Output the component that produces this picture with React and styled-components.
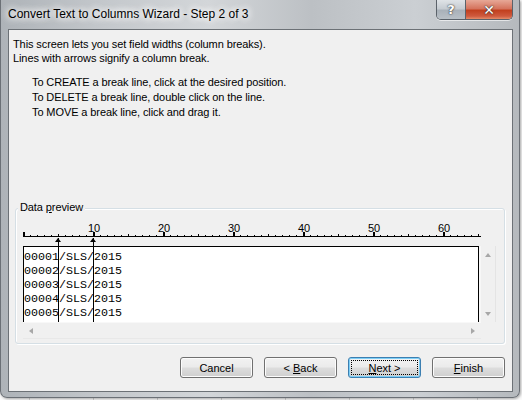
import React from 'react';
import styled, { createGlobalStyle } from 'styled-components';

const Global = createGlobalStyle`
  html, body { margin: 0; padding: 0; }
  body {
    width: 522px; height: 400px; overflow: hidden;
    background: #ffffff;
    font-family: "Liberation Sans", Arial, sans-serif;
  }
`;

const Desktop = styled.div`
  width: 522px;
  height: 400px;
  background-color: #fbfbfb;
  background-image: repeating-linear-gradient(90deg, transparent 0 29px, #d4d4d4 29px 30px, transparent 30px 64px);
`;

const Window = styled.div`
  width: 520px;
  height: 398px;
  display: flex;
  flex-direction: column;
  border-radius: 0 0 7px 7px;
  box-sizing: border-box;
  border: 1px solid #6b7076;
  border-top: none;
  background: linear-gradient(90deg, #aeb3b8 0%, #c4c8cc 20%, #d3d6d9 40%, #bcc0c4 60%, #cbcfd3 80%, #b5b9bd 100%);
  box-shadow: 1px 1px 3px rgba(0,0,0,0.35);
`;

const TitleBar = styled.div`
  height: 29px;
  display: flex;
  align-items: flex-start;
  padding-left: 7px;
  box-sizing: border-box;
`;

const Title = styled.div`
  flex: 1;
  padding-top: 7px;
  font-family: "Liberation Sans", Arial, sans-serif;
  font-size: 12px;
  color: #000;
  text-shadow: 0 0 6px #fff, 0 0 8px #fff, 0 0 10px #fff;
`;

const CaptionButtons = styled.div`
  display: flex;
  margin-right: 6px;
  border: 1px solid #5b626a;
  border-top: none;
  border-radius: 0 0 5px 5px;
  overflow: hidden;
  height: 19px;
  box-shadow: 0 1px 0 rgba(255,255,255,0.6);
`;

const CaptionButton = styled.div`
  width: ${p => p.$w}px;
  height: 19px;
  display: flex;
  align-items: center;
  justify-content: center;
  font-family: "DejaVu Sans", sans-serif;
  font-weight: bold;
  font-size: ${p => p.$fs}px;
  color: #fff;
  text-shadow: 0 0 1px #333, 0 0 2px #333;
  background: ${p => p.$close
    ? 'linear-gradient(180deg, #e7a897 0%, #d5745e 45%, #c2401f 55%, #cf5a3e 85%, #e58c69 100%)'
    : 'linear-gradient(180deg, #dfe3e7 0%, #c6ccd2 45%, #a9b1b9 55%, #b9c0c6 100%)'};
  border-left: ${p => p.$close ? '1px solid #5b626a' : 'none'};
`;

const Client = styled.div`
  flex: 1;
  margin: 0 6px 5px 7px;
  border: 1px solid #6c7176;
  background: #f0f0f0;
  display: flex;
  flex-direction: column;
  font-family: "Liberation Sans", Arial, sans-serif;
  font-size: 11px;
  color: #000;
`;

const Intro = styled.div`
  padding: 7px 0 0 4px;
  line-height: 14px;
  letter-spacing: -0.1px;
`;

const Steps = styled.div`
  padding: 10px 0 0 23px;
  line-height: 15px;
  letter-spacing: -0.1px;
`;

const Group = styled.div`
  position: relative;
  margin: 88px 7px 0 6px;
  height: 136px;
  box-sizing: border-box;
  border: 1px solid #d5dfe5;
  border-radius: 3px;
  box-shadow: inset 1px 1px 0 #fff, 1px 1px 0 #fff;
  padding: 15px 0 0 7px;
`;

const Legend = styled.span`
  position: absolute;
  left: 2px;
  top: -8px;
  padding: 0 2px;
  background: #f0f0f0;
  line-height: 13px;
  letter-spacing: -0.1px;
`;

const Preview = styled.div`
  position: relative;
  width: 475px;
`;

const RulerSvg = styled.svg`
  display: block;
  overflow: visible;
`;

const DataRow = styled.div`
  display: flex;
`;

const DataPane = styled.div`
  width: 456px;
  height: 76px;
  background: #fff;
  border: 1px solid #000;
  border-bottom: none;
  padding-top: 3px;
  box-sizing: border-box;
  overflow: hidden;
`;

const DataLine = styled.div`
  font-family: "Liberation Mono", "Courier New", monospace;
  font-size: 11.67px;
  line-height: 14px;
  height: 14px;
  white-space: pre;
`;

const VScroll = styled.div`
  width: 17px;
  height: 76px;
  background: #f0f0f0;
  display: flex;
  flex-direction: column;
  justify-content: space-between;
  align-items: center;
  box-sizing: border-box;
  padding: 7px 0 6px;
  border-left: 2px solid #f7f7f7;
  border-right: 1px solid #e4e4e4;
`;

const HScroll = styled.div`
  width: 458px;
  height: 17px;
  background: #f0f0f0;
  display: flex;
  justify-content: space-between;
  align-items: center;
  box-sizing: border-box;
  padding: 0 6px;
  border-top: 1px solid #f8f8f8;
  border-bottom: 1px solid #e8e8e8;
`;

const Arrow = styled.div`
  width: 0;
  height: 0;
  border-style: solid;
  ${p => p.$dir === 'up' && 'border-width: 0 3.5px 4px 3.5px; border-color: transparent transparent #a7a7a7 transparent;'}
  ${p => p.$dir === 'down' && 'border-width: 4px 3.5px 0 3.5px; border-color: #a7a7a7 transparent transparent transparent;'}
  ${p => p.$dir === 'left' && 'border-width: 3.5px 4px 3.5px 0; border-color: transparent #a7a7a7 transparent transparent;'}
  ${p => p.$dir === 'right' && 'border-width: 3.5px 0 3.5px 4px; border-color: transparent transparent transparent #a7a7a7;'}
`;

const BreakLine = styled.div`
  position: absolute;
  top: 14px;
  width: 1px;
  height: 84px;
  background: #000;
  &::before {
    content: "";
    position: absolute;
    left: -3px;
    top: 0;
    border-style: solid;
    border-width: 0 3.5px 4px 3.5px;
    border-color: transparent transparent #000 transparent;
  }
`;

const ButtonRow = styled.div`
  display: flex;
  justify-content: flex-end;
  gap: 11px;
  padding: 13px 7px 0 0;
`;

const Button = styled.div`
  width: 73px;
  height: 21px;
  box-sizing: border-box;
  border: 1px solid ${p => p.$default ? '#3c7fb1' : '#707070'};
  border-radius: 3px;
  background: linear-gradient(180deg, #f2f2f2 0%, #ebebeb 48%, #dddddd 52%, #cfcfcf 100%);
  box-shadow: inset 0 0 0 1px ${p => p.$default ? '#7ecff7' : '#fcfcfc'};
  display: flex;
  align-items: center;
  justify-content: center;
  font-size: 11px;
  white-space: pre;
  position: relative;
  ${p => p.$default && `
    &::after {
      content: "";
      position: absolute;
      inset: 2px;
      border: 1px dotted #000;
    }
  `}
`;

const Key = styled.span`
  text-decoration: underline;
`;

const rows = ['00001/SLS/2015', '00002/SLS/2015', '00003/SLS/2015', '00004/SLS/2015', '00005/SLS/2015'];
const breaks = [5, 10];

function Ruler() {
  const ticks = [];
  for (let i = 0; i <= 65; i++) {
    const x = 7 * i;
    if (i % 10 === 0) ticks.push(<rect key={i} x={x} y={8} width={2} height={5} fill="#000" />);
    else if (i % 5 === 0) ticks.push(<rect key={i} x={x} y={10} width={1} height={3} fill="#000" />);
    else ticks.push(<rect key={i} x={x} y={11} width={1} height={1} fill="#000" />);
  }
  const labels = [10, 20, 30, 40, 50, 60].map(n => (
    <text key={n} x={7 * n + 1} y={8} textAnchor="middle" fontFamily="Liberation Sans, Arial, sans-serif" fontSize="11" fill="#000">{n}</text>
  ));
  return (
    <RulerSvg width="475" height="22" viewBox="0 0 475 22">
      <rect x="0" y="12" width="458" height="1" fill="#000" />
      {ticks}
      {labels}
    </RulerSvg>
  );
}

export default function App() {
  return (
    <Desktop>
      <Global />
      <Window>
        <TitleBar>
          <Title>Convert Text to Columns Wizard - Step 2 of 3</Title>
          <CaptionButtons>
            <CaptionButton $w={28} $fs={13}>?</CaptionButton>
            <CaptionButton $w={46} $fs={14} $close>✕</CaptionButton>
          </CaptionButtons>
        </TitleBar>
        <Client>
          <Intro>
            <div>This screen lets you set field widths (column breaks).</div>
            <div>Lines with arrows signify a column break.</div>
          </Intro>
          <Steps>
            <div>To CREATE a break line, click at the desired position.</div>
            <div>To DELETE a break line, double click on the line.</div>
            <div>To MOVE a break line, click and drag it.</div>
          </Steps>
          <Group>
            <Legend>Data <Key>p</Key>review</Legend>
            <Preview>
              <Ruler />
              <DataRow>
                <DataPane>
                  {rows.map(r => <DataLine key={r}>{r}</DataLine>)}
                </DataPane>
                <VScroll>
                  <Arrow $dir="up" />
                  <Arrow $dir="down" />
                </VScroll>
              </DataRow>
              <HScroll>
                <Arrow $dir="left" />
                <Arrow $dir="right" />
              </HScroll>
              {breaks.map(b => <BreakLine key={b} style={{ left: 7 * b }} />)}
            </Preview>
          </Group>
          <ButtonRow>
            <Button>Cancel</Button>
            <Button>{'< '}<Key>B</Key>ack</Button>
            <Button $default><Key>N</Key>{'ext >'}</Button>
            <Button><Key>F</Key>inish</Button>
          </ButtonRow>
        </Client>
      </Window>
    </Desktop>
  );
}
